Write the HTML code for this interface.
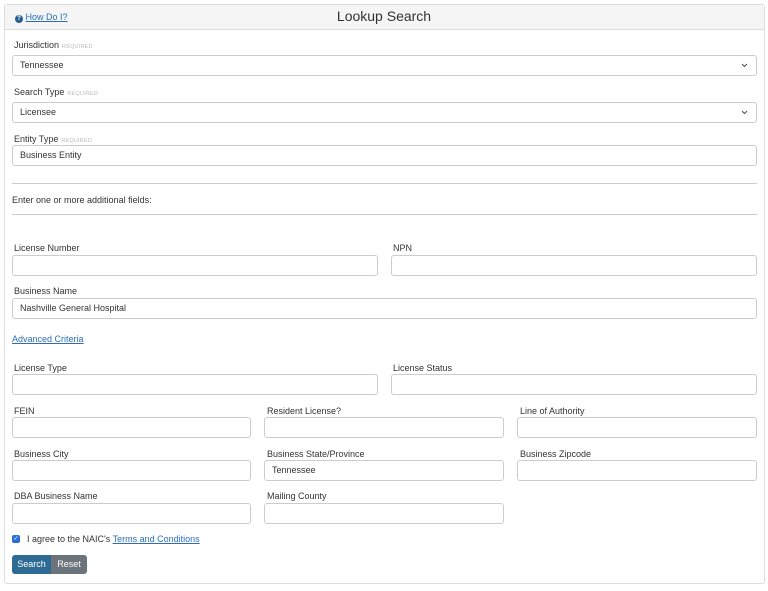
<!DOCTYPE html>
<html><head><style>
*{box-sizing:border-box;margin:0;padding:0}
body{width:768px;height:591px;background:#fff;font-family:"Liberation Sans",sans-serif;font-size:9px;color:#333;position:relative;overflow:hidden}
.panel{position:absolute;left:4px;top:4px;width:761px;height:580px;border:1px solid #ddd;border-radius:3px}
.hdr{position:absolute;left:5px;top:5px;width:759px;height:25px;background:#f5f5f5;border-bottom:1px solid #ddd}
.a{position:absolute}
.lbl{position:absolute;font-size:9px;color:#333}
.req{font-size:5.5px;color:#bbb;letter-spacing:.2px;margin-left:3px}
.in{position:absolute;height:21px;border:1px solid #ccc;border-radius:3px;background:#fff;padding-left:7px;line-height:19px;font-size:9px;color:#333}
.chev{position:absolute;right:8px;top:7px}
.hr{position:absolute;left:12px;width:745px;height:1px;background:#ccc}
a{color:#2a6ebb;text-decoration:underline}
</style></head><body>
<div class="panel"></div>
<div class="hdr"></div>
<div class="a" style="left:15px;top:12px;font-size:9px;line-height:10px"><span style="display:inline-block;width:8px;height:8px;border-radius:50%;background:#2a5f8f;color:#fff;font-size:6px;text-align:center;line-height:8px;font-weight:bold;vertical-align:0">?</span> <a>How Do I?</a></div>
<div class="a" style="left:0;width:768px;top:8px;text-align:center;font-size:14px;color:#333">Lookup Search</div>

<div class="lbl" style="left:14px;top:40px">Jurisdiction<span class="req">REQUIRED</span></div>
<div class="in" style="left:12px;top:55px;width:745px">Tennessee<svg class="chev" width="7" height="5" viewBox="0 0 7 5"><path d="M1 1l2.5 2.5L6 1" stroke="#555" stroke-width="1.1" fill="none"/></svg></div>
<div class="lbl" style="left:14px;top:87px">Search Type<span class="req">REQUIRED</span></div>
<div class="in" style="left:12px;top:102px;width:745px">Licensee<svg class="chev" width="7" height="5" viewBox="0 0 7 5"><path d="M1 1l2.5 2.5L6 1" stroke="#555" stroke-width="1.1" fill="none"/></svg></div>
<div class="lbl" style="left:14px;top:134px">Entity Type<span class="req">REQUIRED</span></div>
<div class="in" style="left:12px;top:145px;width:745px">Business Entity</div>
<div class="hr" style="top:183px"></div>
<div class="lbl" style="left:12px;top:195px">Enter one or more additional fields:</div>
<div class="hr" style="top:214px"></div>

<div class="lbl" style="left:14px;top:243px">License Number</div>
<div class="in" style="left:12px;top:255px;width:366px"></div>
<div class="lbl" style="left:393px;top:243px">NPN</div>
<div class="in" style="left:391px;top:255px;width:366px"></div>
<div class="lbl" style="left:14px;top:286px">Business Name</div>
<div class="in" style="left:12px;top:298px;width:745px">Nashville General Hospital</div>
<div class="a" style="left:12px;top:334px"><a>Advanced Criteria</a></div>

<div class="lbl" style="left:14px;top:363px">License Type</div>
<div class="in" style="left:12px;top:374px;width:366px"></div>
<div class="lbl" style="left:393px;top:363px">License Status</div>
<div class="in" style="left:391px;top:374px;width:366px"></div>

<div class="lbl" style="left:14px;top:406px">FEIN</div>
<div class="in" style="left:12px;top:417px;width:239px"></div>
<div class="lbl" style="left:267px;top:406px">Resident License?</div>
<div class="in" style="left:264px;top:417px;width:240px"></div>
<div class="lbl" style="left:520px;top:406px">Line of Authority</div>
<div class="in" style="left:517px;top:417px;width:240px"></div>

<div class="lbl" style="left:14px;top:449px">Business City</div>
<div class="in" style="left:12px;top:460px;width:239px"></div>
<div class="lbl" style="left:267px;top:449px">Business State/Province</div>
<div class="in" style="left:264px;top:460px;width:240px">Tennessee</div>
<div class="lbl" style="left:520px;top:449px">Business Zipcode</div>
<div class="in" style="left:517px;top:460px;width:240px"></div>

<div class="lbl" style="left:14px;top:491px">DBA Business Name</div>
<div class="in" style="left:12px;top:503px;width:239px"></div>
<div class="lbl" style="left:267px;top:491px">Mailing County</div>
<div class="in" style="left:264px;top:503px;width:240px"></div>

<div class="a" style="left:12px;top:535px;width:8px;height:8px;background:#2a6ed8;border-radius:2px;color:#fff;font-size:6px;line-height:8px;text-align:center">&#10003;</div>
<div class="lbl" style="left:27px;top:534px">I agree to the NAIC's <a>Terms and Conditions</a></div>
<div class="a" style="left:12px;top:555px;width:39px;height:19px;background:#2d6a94;border-radius:3px 0 0 3px;color:#fff;text-align:center;line-height:19px">Search</div>
<div class="a" style="left:51px;top:555px;width:36px;height:19px;background:#6b737b;border-radius:0 3px 3px 0;color:#fff;text-align:center;line-height:19px">Reset</div>
</body></html>
